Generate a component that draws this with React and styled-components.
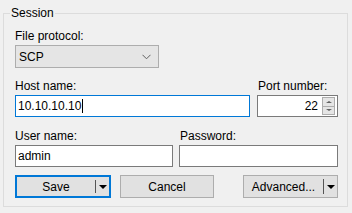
import React from "react";
import styled, { createGlobalStyle } from "styled-components";

const GlobalStyle = createGlobalStyle`
  html, body {
    margin: 0;
    padding: 0;
    background: #f0f0f0;
  }
  body {
    font-family: "Liberation Sans", Arial, sans-serif;
    font-size: 12px;
    color: #000;
  }
`;

const Page = styled.div`
  width: 352px;
  height: 213px;
  padding: 6px 0 0 3px;
  box-sizing: border-box;
`;

const Group = styled.fieldset`
  width: 345px;
  height: 201px;
  box-sizing: border-box;
  margin: 0;
  padding: 9px 9px 0 11px;
  border: 1px solid #dcdcdc;
  display: flex;
  flex-direction: column;
`;

const Legend = styled.legend`
  padding: 0 1px;
  margin-left: -5px;
  line-height: 14px;
`;

const Row = styled.div`
  display: flex;
  gap: ${({ $gap }) => $gap || 6}px;
  margin-bottom: ${({ $after }) => $after || 0}px;
`;

const Field = styled.div`
  display: flex;
  flex-direction: column;
  width: ${({ $w }) => $w}px;
`;

const Label = styled.label`
  line-height: 15px;
  height: 15px;
  margin-bottom: 1px;
  padding-left: ${({ $indent }) => $indent || 0}px;
  white-space: nowrap;
`;

const Select = styled.div`
  height: 23px;
  box-sizing: border-box;
  border: 1px solid #adadad;
  background: #e5e5e5;
  display: flex;
  align-items: center;
  justify-content: space-between;
  padding: 0 7px 0 3px;
`;

const Input = styled.div`
  height: 22px;
  box-sizing: border-box;
  border: 1px solid ${({ $focus }) => ($focus ? "#0078d7" : "#7a7a7a")};
  background: #fff;
  display: flex;
  align-items: center;
  justify-content: ${({ $right }) => ($right ? "flex-end" : "flex-start")};
  padding: 0 ${({ $right }) => ($right ? 2 : 2)}px 0 2px;
  white-space: nowrap;
`;

const Caret = styled.span`
  display: inline-block;
  width: 1px;
  height: 14px;
  background: #000;
  margin-left: 1px;
`;

const Spinner = styled.div`
  display: flex;
  flex-direction: column;
  margin-left: 4px;
  height: 18px;
  width: 13px;
`;

const SpinButton = styled.div`
  flex: 1;
  border: 1px solid #adadad;
  background: #e5e5e5;
  display: flex;
  align-items: center;
  justify-content: center;
  & + & {
    border-top: none;
  }
`;

const Tri = styled.span`
  width: 0;
  height: 0;
  border-left: ${({ $s }) => $s || 3}px solid transparent;
  border-right: ${({ $s }) => $s || 3}px solid transparent;
  ${({ $up, $s }) =>
    $up
      ? `border-bottom: ${($s || 3) - 0.5}px solid ${"#606060"};`
      : `border-top: ${($s || 3) - 0.5}px solid ${"#606060"};`}
`;

const Button = styled.div`
  width: ${({ $w }) => $w}px;
  height: 23px;
  box-sizing: border-box;
  background: #e1e1e1;
  border: ${({ $default }) => ($default ? "2px solid #0078d7" : "1px solid #adadad")};
  display: flex;
  align-items: stretch;
  margin-left: ${({ $push }) => ($push ? "auto" : "0")};
`;

const ButtonText = styled.span`
  flex: 1;
  display: flex;
  align-items: center;
  justify-content: center;
`;

const SplitArrow = styled.span`
  width: 13px;
  display: flex;
  align-items: center;
  justify-content: center;
  border-left: 1px solid #555;
  margin: 3px 0;
`;

const ArrowDown = styled.span`
  width: 0;
  height: 0;
  border-left: 4px solid transparent;
  border-right: 4px solid transparent;
  border-top: 4px solid #000;
`;

const Chevron = () => (
  <svg width="9" height="6" viewBox="0 0 9 6">
    <path d="M0.5 0.8 L4.5 4.8 L8.5 0.8" fill="none" stroke="#606060" strokeWidth="1" />
  </svg>
);

export default function App() {
  return (
    <>
      <GlobalStyle />
      <Page>
        <Group>
          <Legend>Session</Legend>
          <Row $after={11}>
            <Field $w={144}>
              <Label>File protocol:</Label>
              <Select>
                <span>SCP</span>
                <Chevron />
              </Select>
            </Field>
          </Row>
          <Row $gap={7} $after={12}>
            <Field $w={235}>
              <Label>Host name:</Label>
              <Input $focus>
                10.10.10.10
                <Caret />
              </Input>
            </Field>
            <Field $w={81}>
              <Label $indent={1}>Port number:</Label>
              <Input $right>
                22
                <Spinner>
                  <SpinButton>
                    <Tri $up />
                  </SpinButton>
                  <SpinButton>
                    <Tri />
                  </SpinButton>
                </Spinner>
              </Input>
            </Field>
          </Row>
          <Row $gap={6} $after={8}>
            <Field $w={158}>
              <Label>User name:</Label>
              <Input>admin</Input>
            </Field>
            <Field $w={159}>
              <Label $indent={1}>Password:</Label>
              <Input />
            </Field>
          </Row>
          <Row $gap={9}>
            <Button $w={96} $default>
              <ButtonText>Save</ButtonText>
              <SplitArrow>
                <ArrowDown />
              </SplitArrow>
            </Button>
            <Button $w={94}>
              <ButtonText>Cancel</ButtonText>
            </Button>
            <Button $w={95} $push>
              <ButtonText>Advanced...</ButtonText>
              <SplitArrow>
                <ArrowDown />
              </SplitArrow>
            </Button>
          </Row>
        </Group>
      </Page>
    </>
  );
}
